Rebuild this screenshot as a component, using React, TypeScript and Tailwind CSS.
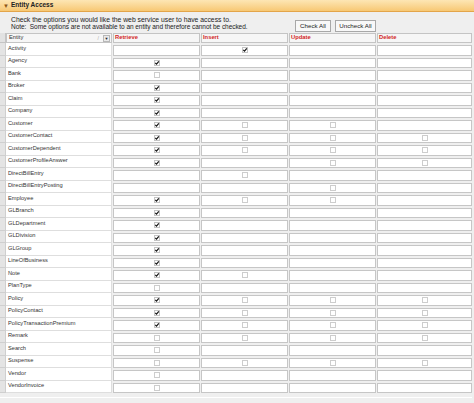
import React from "react";

type S = "c" | "u" | "";
const rows: [string, S, S, S, S][] = [
  ["Activity", "", "c", "", ""],
  ["Agency", "c", "", "", ""],
  ["Bank", "u", "", "", ""],
  ["Broker", "c", "", "", ""],
  ["Claim", "c", "", "", ""],
  ["Company", "c", "", "", ""],
  ["Customer", "c", "u", "u", ""],
  ["CustomerContact", "c", "u", "u", "u"],
  ["CustomerDependent", "c", "u", "u", "u"],
  ["CustomerProfileAnswer", "c", "", "u", "u"],
  ["DirectBillEntry", "", "u", "", ""],
  ["DirectBillEntryPosting", "", "", "u", ""],
  ["Employee", "c", "u", "u", ""],
  ["GLBranch", "c", "", "", ""],
  ["GLDepartment", "c", "", "", ""],
  ["GLDivision", "c", "", "", ""],
  ["GLGroup", "c", "", "", ""],
  ["LineOfBusiness", "c", "", "", ""],
  ["Note", "c", "u", "", ""],
  ["PlanType", "u", "", "", ""],
  ["Policy", "c", "u", "u", "u"],
  ["PolicyContact", "c", "u", "u", "u"],
  ["PolicyTransactionPremium", "c", "u", "u", "u"],
  ["Remark", "u", "u", "u", "u"],
  ["Search", "u", "", "", ""],
  ["Suspense", "u", "u", "u", "u"],
  ["Vendor", "u", "", "", ""],
  ["VendorInvoice", "u", "", "", ""],
];

function Box({ s }: { s: S }) {
  if (!s) return null;
  return (
    <svg width="6" height="6" viewBox="0 0 6 6" className="block">
      <rect x="0.5" y="0.5" width="5" height="5" fill="#fff" stroke={s === "c" ? "#c4c4c4" : "#cdcdcd"} />
      {s === "c" && <path d="M1.3 2.9 L2.5 4.2 L4.8 1.4" fill="none" stroke="#111" strokeWidth="1.2" />}
    </svg>
  );
}

const cols = "grid grid-cols-[6px_106px_88px_88px_88px_96px]";

export default function App() {
  return (
    <div className="w-[474px] h-[403px] overflow-hidden bg-[#efefef] text-black" style={{ fontFamily: '"Liberation Sans", Arial, sans-serif' }}>
      <div className="h-[12px] flex items-center bg-gradient-to-b from-[#fde6b4] to-[#f7c873] border-b border-[#e3a54a]">
        <span className="text-[6px] text-[#8a5514] ml-[3px] mr-[2px] leading-none">▼</span>
        <span className="text-[6.5px] font-bold text-[#222] leading-none">Entity Access</span>
      </div>
      <div className="flex h-[21px] text-[6.8px] text-[#222]">
        <div className="w-[295px] pl-[11px] pt-[4px] leading-[7px]">
          <div>Check the options you would like the web service user to have access to.</div>
          <div className="text-[6.5px] tracking-[-0.05px]">Note:&nbsp; Some options are not available to an entity and therefore cannot be checked.</div>
        </div>
        <div className="flex gap-[4px] mt-[8px]">
          <div className="w-[36px] h-[12px] flex items-center justify-center bg-[#f8f8f8] border border-[#a8a8a8] text-[6.2px]">Check All</div>
          <div className="w-[41px] h-[12px] flex items-center justify-center bg-[#f8f8f8] border border-[#a8a8a8] text-[6.2px]">Uncheck All</div>
        </div>
      </div>
      <div className="text-[5.7px] leading-none">
        <div className={cols + " h-[10px]"}>
          <div className="bg-[#e2e2e2] border-r border-b border-[#c4c4c4]" />
          <div className="bg-[#f6f6f6] border border-[#c4c4c4] flex items-center pl-[2px] relative">
            <span className="text-[#333]">Entity</span>
            <span className="absolute right-[12px] top-[2px] text-[#aaa] text-[5px]">/</span>
            <span className="absolute right-[1px] top-[1px] w-[7px] h-[7px] bg-[#eaeaea] border border-[#b8b8b8] flex items-center justify-center text-[4px] text-[#222]">▼</span>
          </div>
          {["Retrieve", "Insert", "Update", "Delete"].map((h) => (
            <div key={h} className="bg-[#f6f6f6] border border-[#c4c4c4] ml-[1px] flex items-center pl-[1px] text-[#d21f1f] font-bold text-[5.8px]">
              {h}
            </div>
          ))}
        </div>
        {rows.map(([name, r, i, u, d]) => (
          <div key={name} className={cols + " h-[12.5px]"}>
            <div className="bg-[#e4e4e4] border-r border-b border-[#cfcfcf]" />
            <div className="bg-white border-b border-r border-[#dedede] flex items-center pl-[2px] text-[#333]">{name}</div>
            {[r, i, u, d].map((s, k) => (
              <div key={k} className="pt-[2px] pl-[1px]">
                <div className="h-full bg-white border border-[#c6c6c6] flex items-center justify-center">
                  <Box s={s} />
                </div>
              </div>
            ))}
          </div>
        ))}
        <div className="h-[4px]" />
        <div className="h-[1px] bg-white w-[472px]" />
      </div>
    </div>
  );
}
